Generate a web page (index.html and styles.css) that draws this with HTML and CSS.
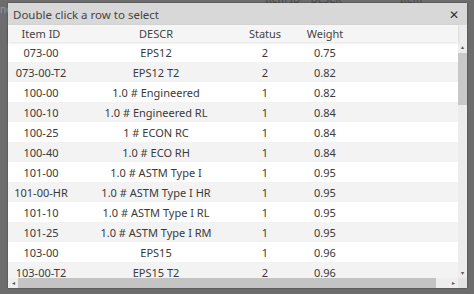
FILE: index.html
```html
<!DOCTYPE html>
<html lang="en">
<head>
    <meta charset="UTF-8">
    <title>Select item</title>
    <link rel="stylesheet" href="styles.css">
</head>
<body>
    <div class="backdrop-text">
        <span class="bt-left">ne</span>
        <span class="bt-mid">Item ID&nbsp;&nbsp;&nbsp;&nbsp;DESCR</span>
        <span class="bt-right">Item</span>
    </div>
    <div class="dialog">
        <div class="titlebar">
            <span>Double click a row to select</span>
            <span class="close">&#x2715;</span>
        </div>
        <div class="grid">
            <div class="grid-body">
                <div class="row head">
                    <div class="c-id">Item ID</div>
                    <div class="c-descr">DESCR</div>
                    <div class="c-status">Status</div>
                    <div class="c-weight">Weight</div>
                </div>
                <div class="rows">
                    <div class="row"><div class="c-id">073-00</div><div class="c-descr">EPS12</div><div class="c-status">2</div><div class="c-weight">0.75</div></div>
                    <div class="row"><div class="c-id">073-00-T2</div><div class="c-descr">EPS12 T2</div><div class="c-status">2</div><div class="c-weight">0.82</div></div>
                    <div class="row"><div class="c-id">100-00</div><div class="c-descr">1.0 # Engineered</div><div class="c-status">1</div><div class="c-weight">0.82</div></div>
                    <div class="row"><div class="c-id">100-10</div><div class="c-descr">1.0 # Engineered RL</div><div class="c-status">1</div><div class="c-weight">0.84</div></div>
                    <div class="row"><div class="c-id">100-25</div><div class="c-descr">1 # ECON RC</div><div class="c-status">1</div><div class="c-weight">0.84</div></div>
                    <div class="row"><div class="c-id">100-40</div><div class="c-descr">1.0 # ECO RH</div><div class="c-status">1</div><div class="c-weight">0.84</div></div>
                    <div class="row"><div class="c-id">101-00</div><div class="c-descr">1.0 # ASTM Type I</div><div class="c-status">1</div><div class="c-weight">0.95</div></div>
                    <div class="row"><div class="c-id">101-00-HR</div><div class="c-descr">1.0 # ASTM Type I HR</div><div class="c-status">1</div><div class="c-weight">0.95</div></div>
                    <div class="row"><div class="c-id">101-10</div><div class="c-descr">1.0 # ASTM Type I RL</div><div class="c-status">1</div><div class="c-weight">0.95</div></div>
                    <div class="row"><div class="c-id">101-25</div><div class="c-descr">1.0 # ASTM Type I RM</div><div class="c-status">1</div><div class="c-weight">0.95</div></div>
                    <div class="row"><div class="c-id">103-00</div><div class="c-descr">EPS15</div><div class="c-status">1</div><div class="c-weight">0.96</div></div>
                    <div class="row"><div class="c-id">103-00-T2</div><div class="c-descr">EPS15 T2</div><div class="c-status">2</div><div class="c-weight">0.96</div></div>
                </div>
                <div class="hscroll">
                    <span class="arrow">&#x25C2;</span>
                    <div class="htrack"><div class="hthumb"></div></div>
                    <span class="arrow">&#x25B8;</span>
                </div>
            </div>
            <div class="vscroll">
                <span class="arrow">&#x25B4;</span>
                <div class="vtrack"><div class="vthumb"></div></div>
                <span class="arrow">&#x25BE;</span>
                <div class="corner"></div>
            </div>
        </div>
    </div>
</body>
</html>
```

FILE: styles.css
```css
html, body {
    margin: 0;
    height: 100%;
}
body {
    background-color: #6d6d6d;
    font-family: "Noto Sans", "Open Sans", sans-serif;
    font-size: 11px;
    color: #3a3a3a;
    overflow: hidden;
    position: relative;
}
.backdrop-text {
    position: absolute;
    top: -8px;
    left: 0;
    right: 0;
    color: #4a4a4a;
    font-size: 10px;
}
.bt-left {
    position: absolute;
    left: 0;
    top: 10px;
    color: #9a9a9a;
}
.bt-mid {
    position: absolute;
    left: 265px;
}
.bt-right {
    position: absolute;
    left: 400px;
}
.dialog {
    position: absolute;
    left: 8px;
    top: 3px;
    width: 459px;
    height: 285px;
    background-color: #f7f7f7;
    display: flex;
    flex-direction: column;
    box-shadow: 0 0 2px rgba(0, 0, 0, 0.4);
}
.titlebar {
    height: 22px;
    flex: none;
    background-color: #d8d8d8;
    display: flex;
    align-items: center;
    justify-content: space-between;
    padding: 0 8px 0 5px;
    font-size: 11.5px;
    color: #444;
}
.close {
    font-size: 12px;
    color: #333;
}
.grid {
    flex: 1;
    display: flex;
    min-height: 0;
}
.grid-body {
    flex: 1;
    display: flex;
    flex-direction: column;
    min-width: 0;
}
.row {
    display: flex;
    height: 20px;
    align-items: center;
    flex: none;
}
.row > div {
    text-align: center;
    white-space: nowrap;
}
.head {
    height: 17px;
    background-color: #f5f5f5;
    box-shadow: 0 1px 3px rgba(0, 0, 0, 0.12);
    position: relative;
    z-index: 1;
    color: #444;
}
.c-id { width: 66px; }
.c-descr { width: 164px; }
.c-status { width: 54px; }
.c-weight { width: 66px; }
.rows {
    flex: 1;
    overflow: hidden;
    background-color: #ffffff;
}
.rows .row:nth-child(even) {
    background-color: #f3f3f3;
}
.hscroll {
    height: 10px;
    flex: none;
    display: flex;
    align-items: center;
    background-color: #eeeeee;
}
.arrow {
    font-size: 6px;
    color: #555;
    width: 10px;
    text-align: center;
    flex: none;
}
.htrack {
    flex: 1;
    height: 100%;
    display: flex;
}
.hthumb {
    width: 418px;
    background-color: #c4c4c4;
}
.vscroll {
    width: 9px;
    flex: none;
    display: flex;
    flex-direction: column;
    align-items: center;
    background-color: #ececec;
    padding-top: 18px;
}
.vscroll .arrow {
    width: 9px;
    height: 9px;
    line-height: 9px;
}
.vtrack {
    flex: 1;
    width: 100%;
}
.vthumb {
    margin-top: 1px;
    height: 52px;
    background-color: #c8c8c8;
}
.corner {
    width: 9px;
    height: 10px;
    background-color: #e4e4e4;
}
```
